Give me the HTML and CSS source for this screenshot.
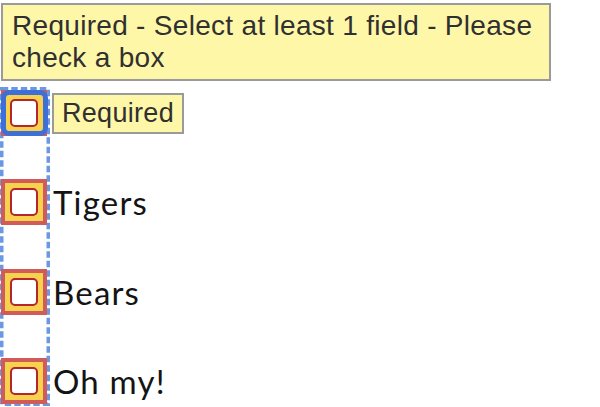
FILE: index.html
```html
<!DOCTYPE html>
<html>
<head>
<meta charset="utf-8">
<link rel="stylesheet" href="styles.css">
</head>
<body>
<div class="page">
  <div class="tip">Required - Select at least 1 field - Please check a box</div>
  <div class="group">
    <svg class="group-outline" width="52" height="320" viewBox="0 0 52 320">
      <rect x="2.75" y="1.75" width="46.5" height="315.5" fill="none" stroke="#6a98e2" stroke-width="3.5" stroke-dasharray="6.5 3"/>
    </svg>
    <div class="row">
      <span class="cb focused"><span class="cb-inner"></span></span>
      <span class="tip small">Required</span>
    </div>
    <div class="row">
      <span class="cb"><span class="cb-inner"></span></span>
      <span class="label">Tigers</span>
    </div>
    <div class="row">
      <span class="cb"><span class="cb-inner"></span></span>
      <span class="label">Bears</span>
    </div>
    <div class="row">
      <span class="cb"><span class="cb-inner"></span></span>
      <span class="label">Oh my!</span>
    </div>
  </div>
</div>
</body>
</html>
```

FILE: styles.css
```css
html, body {
  margin: 0;
  padding: 0;
  background: #ffffff;
}

.page {
  width: 600px;
  height: 407px;
  overflow: hidden;
  padding-top: 3px;
  box-sizing: border-box;
}

.tip {
  margin-left: 1px;
  width: 550px;
  box-sizing: border-box;
  background: #fff7a8;
  border: 2px solid #9a9a9a;
  padding: 5px 9px;
  font-family: "Liberation Sans", Arial, sans-serif;
  font-size: 28px;
  line-height: 32px;
  letter-spacing: 0.3px;
  color: #303030;
}

.tip.small {
  margin-left: 0;
  width: auto;
  font-size: 27px;
  line-height: 31px;
  padding: 3px 8px;
}

.group {
  position: relative;
  margin-top: 9px;
  display: flex;
  flex-direction: column;
  gap: 43.3px;
}

.group-outline {
  position: absolute;
  left: -1px;
  top: -3px;
  z-index: 0;
}

.row {
  position: relative;
  z-index: 1;
  display: flex;
  align-items: center;
  gap: 5px;
  height: 46px;
  padding-left: 1px;
}

.cb {
  position: relative;
  width: 46px;
  height: 46px;
  box-sizing: border-box;
  background: #f8d24e;
  border: 4px solid #d05b58;
  display: flex;
  align-items: center;
  justify-content: center;
  flex: none;
}

.cb-inner {
  width: 28px;
  height: 28px;
  box-sizing: border-box;
  border: 2px solid #b3262b;
  border-radius: 5px;
  background: #ffffff;
}

.cb.focused::after {
  content: "";
  position: absolute;
  left: -4px;
  top: -4px;
  right: -5px;
  bottom: -4px;
  border: 5px solid #3c70d8;
  border-radius: 8px;
}

.label {
  font-family: Lato, "Liberation Sans", sans-serif;
  font-size: 33px;
  letter-spacing: 1.2px;
  color: #141414;
  margin-left: 1px;
}
```
